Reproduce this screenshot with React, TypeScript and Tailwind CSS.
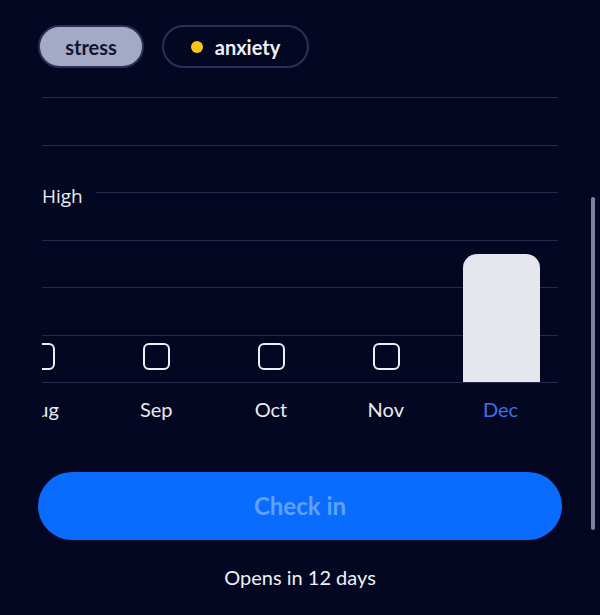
import React from 'react';

const months = [
  { label: 'Aug', kind: 'empty' },
  { label: 'Sep', kind: 'empty' },
  { label: 'Oct', kind: 'empty' },
  { label: 'Nov', kind: 'empty' },
  { label: 'Dec', kind: 'bar' },
];

function EmptyBox() {
  return <div className="w-[27px] h-[27px] rounded-[6px] border-[2.5px] border-[#eef0f6] mb-[12px]" />;
}

export default function App() {
  return (
    <main
      className="relative w-[600px] h-[615px] overflow-hidden bg-[#040721] text-white"
      style={{ fontFamily: 'Lato, "Noto Sans", sans-serif' }}
    >
      {/* filter chips */}
      <div className="flex gap-[18px] pl-[38px] pt-[25px]">
        <button className="h-[43px] w-[106px] rounded-full border-2 border-[#2b2f58] bg-[#a4aac5] text-[20px] font-bold text-[#13162f]">
          stress
        </button>
        <button className="flex h-[43px] w-[147px] items-center justify-center gap-[12px] rounded-full border-2 border-[#2b2f58] text-[20px] font-bold text-[#eef0f8]">
          <span className="h-[12px] w-[12px] rounded-full bg-[#f7c51c]" />
          anxiety
        </button>
      </div>

      {/* chart */}
      <div className="relative ml-[42px] mt-[29px] w-[516px] overflow-hidden">
        <div className="flex flex-col">
          <div className="h-[47.5px] border-t border-[#262a4c]" />
          <div className="h-[47.5px] border-t border-[#262a4c]" />
          <div className="relative h-[47.5px]">
            <span className="absolute left-0 top-[-8px] text-[19px] leading-[24px] text-[#e9ebf3]" style={{ fontFamily: '"Open Sans", sans-serif' }}>
              High
            </span>
            <div className="ml-[54px] border-t border-[#262a4c]" />
          </div>
          <div className="h-[47.5px] border-t border-[#262a4c]" />
          <div className="h-[47.5px] border-t border-[#262a4c]" />
          <div className="h-[47.5px] border-t border-[#262a4c]" />
          <div className="border-t border-[#262a4c]" />
        </div>

        <div className="absolute left-[-58px] top-0 flex h-[285px]">
          {months.map(m => (
            <div key={m.label} className="flex w-[115px] flex-col items-center justify-end">
              {m.kind === 'bar' ? (
                <div className="h-[128px] w-[77px] rounded-t-[14px] bg-[#e6e7ee]" />
              ) : (
                <EmptyBox />
              )}
            </div>
          ))}
        </div>

        <div className="ml-[-58px] mt-[13px] flex h-[26px]">
          {months.map(m => (
            <div
              key={m.label}
              className={`w-[115px] text-center text-[20px] leading-[26px] ${m.kind === 'bar' ? 'text-[#3f70e6]' : 'text-[#e9ebf3]'}`}
            >
              {m.label}
            </div>
          ))}
        </div>
      </div>

      {/* action */}
      <div className="mx-[38px] mt-[50px]">
        <button className="h-[68px] w-full rounded-full bg-[#0a6cff] text-[24px] font-bold text-[#5ea2f7]">
          Check in
        </button>
      </div>
      <p className="mt-[24px] text-center text-[20px] leading-[26px] text-[#eef0f6]">Opens in 12 days</p>

      {/* scrollbar */}
      <div className="absolute right-[5px] top-[197px] h-[333px] w-[4px] rounded-full bg-[#7f829e]" />
    </main>
  );
}
